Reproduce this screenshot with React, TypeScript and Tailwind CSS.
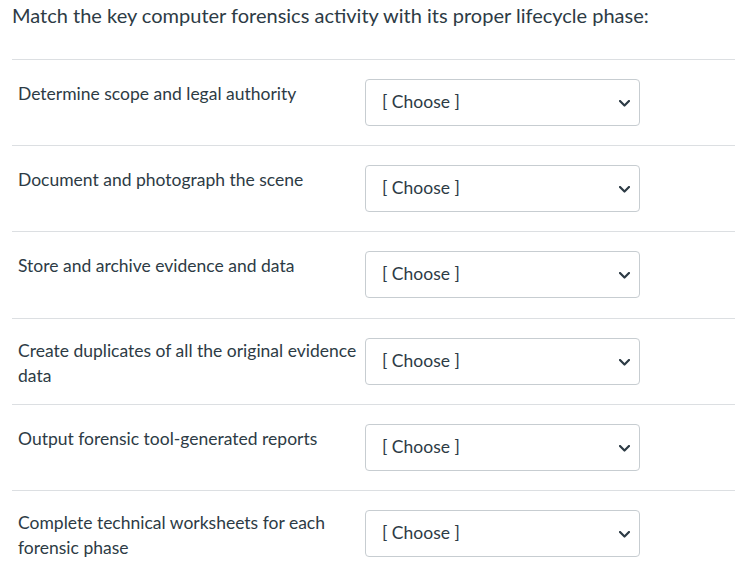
const items = [
  { label: "Determine scope and legal authority", two: false, tall: false },
  { label: "Document and photograph the scene", two: false, tall: false },
  { label: "Store and archive evidence and data", two: false, tall: true },
  { label: "Create duplicates of all the original evidence data", two: true, tall: false },
  { label: "Output forensic tool-generated reports", two: false, tall: false },
  { label: "Complete technical worksheets for each forensic phase", two: true, tall: false },
];

export default function App() {
  return (
    <div className="w-[735px] h-[577px] overflow-hidden bg-white text-[#2d3b45] font-['Lato','Liberation_Sans',sans-serif]">
      <h1 className="pl-[12px] pt-[1px] text-[20px] leading-[28px] h-[59px]">
        Match the key computer forensics activity with its proper lifecycle phase:
      </h1>
      <div className="ml-[12px]">
        {items.map((item, i) => (
          <div
            key={i}
            className={item.tall ? "flex items-start h-[87px] border-t border-[#dcdfe2] pt-[19px]" : "flex items-start h-[86px] border-t border-[#dcdfe2] pt-[19px]"}
          >
            <div className={item.two ? "w-[353px] pl-[6px] pr-[4px] text-[17.5px] leading-[25px]" : "w-[353px] pl-[6px] pr-[4px] pt-[2px] text-[17.5px] leading-[25px]"}>
              {item.label}
            </div>
            <div className="w-[275px] h-[47px] border border-[#c7cdd1] rounded-[4px] flex items-center justify-between pl-[16px] pr-[9px]">
              <span className="text-[17.5px]">[ Choose ]</span>
              <svg width="11" height="7" viewBox="0 0 11 7" className="mt-[2px]">
                <polyline points="1,1 5.5,5.5 10,1" fill="none" stroke="#2d3b45" strokeWidth="2.2" strokeLinecap="round" strokeLinejoin="round" />
              </svg>
            </div>
          </div>
        ))}
      </div>
    </div>
  );
}
